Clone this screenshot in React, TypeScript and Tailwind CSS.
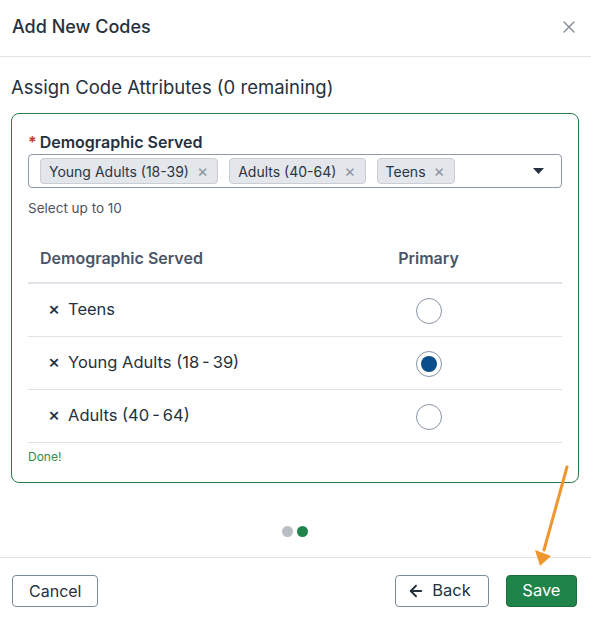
import { ArrowLeft, X } from "lucide-react";

const TAGS = ["Young Adults (18-39)", "Adults (40-64)", "Teens"];

const ROWS = [
  { label: "Teens", primary: false },
  { label: "Young Adults (18\u2009-\u200939)", primary: true },
  { label: "Adults (40\u2009-\u200964)", primary: false },
];

function Tag({ label }: { label: string }) {
  return (
    <span className="flex h-[26px] items-center gap-[8px] rounded-[4px] border border-[#c9ced5] bg-[#e3e6ea] pl-2 pr-[9px] text-[14px] text-[#2b3544]">
      {label}
      <span className="text-[17px] leading-none text-[#8a929d]">×</span>
    </span>
  );
}

function Radio({ checked }: { checked: boolean }) {
  return (
    <span className="flex h-[26px] w-[26px] items-center justify-center rounded-full border border-[#8795a6] bg-white">
      {checked && <span className="h-[16px] w-[16px] rounded-full bg-[#0b4e8c]" />}
    </span>
  );
}

export default function App() {
  return (
    <div
      className="relative h-[618px] w-[591px] overflow-hidden bg-white text-[#2b3544]"
      style={{ fontFamily: "Inter, 'Noto Sans', sans-serif" }}
    >
      <header className="flex h-[57px] items-center justify-between border-b border-[#dfe2e6] pl-3 pr-[12px] pb-[3px]">
        <h1 className="text-[18px] font-medium text-[#263140]">Add New Codes</h1>
        <X className="h-[20px] w-[20px] text-[#8a939e]" strokeWidth={1.75} />
      </header>

      <main className="px-[11px] pr-[12px] pt-[16px]">
        <h2 className="text-[18.5px] leading-[28px] text-[#263140]">
          Assign Code Attributes (0 remaining)
        </h2>

        <section className="mt-[12px] rounded-[8px] border border-[#2a7a4b] px-4 pb-[17px] pt-[18px]">
          <label className="flex items-center text-[16px] font-semibold leading-[20px] text-[#263140]">
            <span className="mr-[3px] text-[#c0392b]">*</span>
            Demographic Served
          </label>

          <div className="mt-[2px] flex h-[34px] items-center gap-[11px] rounded-[4px] border border-[#8d99a8] pl-[11px] pr-[17px]">
            {TAGS.map((t) => (
              <Tag key={t} label={t} />
            ))}
            <svg className="ml-auto" width="11" height="6" viewBox="0 0 11 6">
              <path d="M0 0h11L5.5 6z" fill="#263140" />
            </svg>
          </div>

          <p className="mt-[11px] text-[13.5px] leading-[18px] text-[#4b5563]">Select up to 10</p>

          <table className="mt-[16px] w-full border-collapse">
            <thead>
              <tr className="border-b-2 border-[#dfe2e6]">
                <th className="h-[50px] w-1/2 pl-3 text-left text-[16px] font-semibold text-[#4a5568]">
                  Demographic Served
                </th>
                <th className="h-[50px] w-1/2 text-center text-[16px] font-semibold text-[#4a5568]">
                  Primary
                </th>
              </tr>
            </thead>
            <tbody>
              {ROWS.map((r) => (
                <tr key={r.label} className="border-b border-[#dfe2e6]">
                  <td className="h-[53px] pl-[20px] pb-[3px] text-[16.5px] text-[#263140]">
                    <span className="mr-[8px] text-[18px] font-medium">×</span>
                    {r.label}
                  </td>
                  <td className="h-[53px]">
                    <div className="flex justify-center pt-[2px]">
                      <Radio checked={r.primary} />
                    </div>
                  </td>
                </tr>
              ))}
            </tbody>
          </table>

          <p className="mt-[6px] text-[12px] leading-[16px] text-[#2e8b4e]">Done!</p>
        </section>

        <div className="flex justify-center gap-[4px] pt-[43px]">
          <span className="h-[11px] w-[11px] rounded-full bg-[#b9bec5]" />
          <span className="h-[11px] w-[11px] rounded-full bg-[#1e8449]" />
        </div>
      </main>

      <footer className="mt-[20px] flex items-center border-t border-[#dfe2e6] pl-3 pr-[14px] pt-[17px]">
        <button className="h-[32px] rounded-[4px] border border-[#7d8a9a] px-4 text-[16px] text-[#263140]">
          Cancel
        </button>
        <button className="ml-auto flex h-[32px] items-center gap-[7px] rounded-[4px] border border-[#7d8a9a] pl-[11px] pr-[17px] text-[16.5px] text-[#263140]">
          <ArrowLeft className="h-[18px] w-[18px]" strokeWidth={2.5} />
          Back
        </button>
        <button className="ml-[17px] h-[32px] rounded-[4px] border border-[#1a6e3c] bg-[#1e8449] px-[15.5px] text-[16.5px] text-white">
          Save
        </button>
      </footer>

      <svg className="pointer-events-none absolute left-0 top-0" width="591" height="618">
        <line x1="567" y1="467" x2="544" y2="550" stroke="#f0962e" strokeWidth="3" strokeLinecap="round" />
        <path d="M535 550 L551 556 L540 566 Z" fill="#f0962e" />
      </svg>
    </div>
  );
}
